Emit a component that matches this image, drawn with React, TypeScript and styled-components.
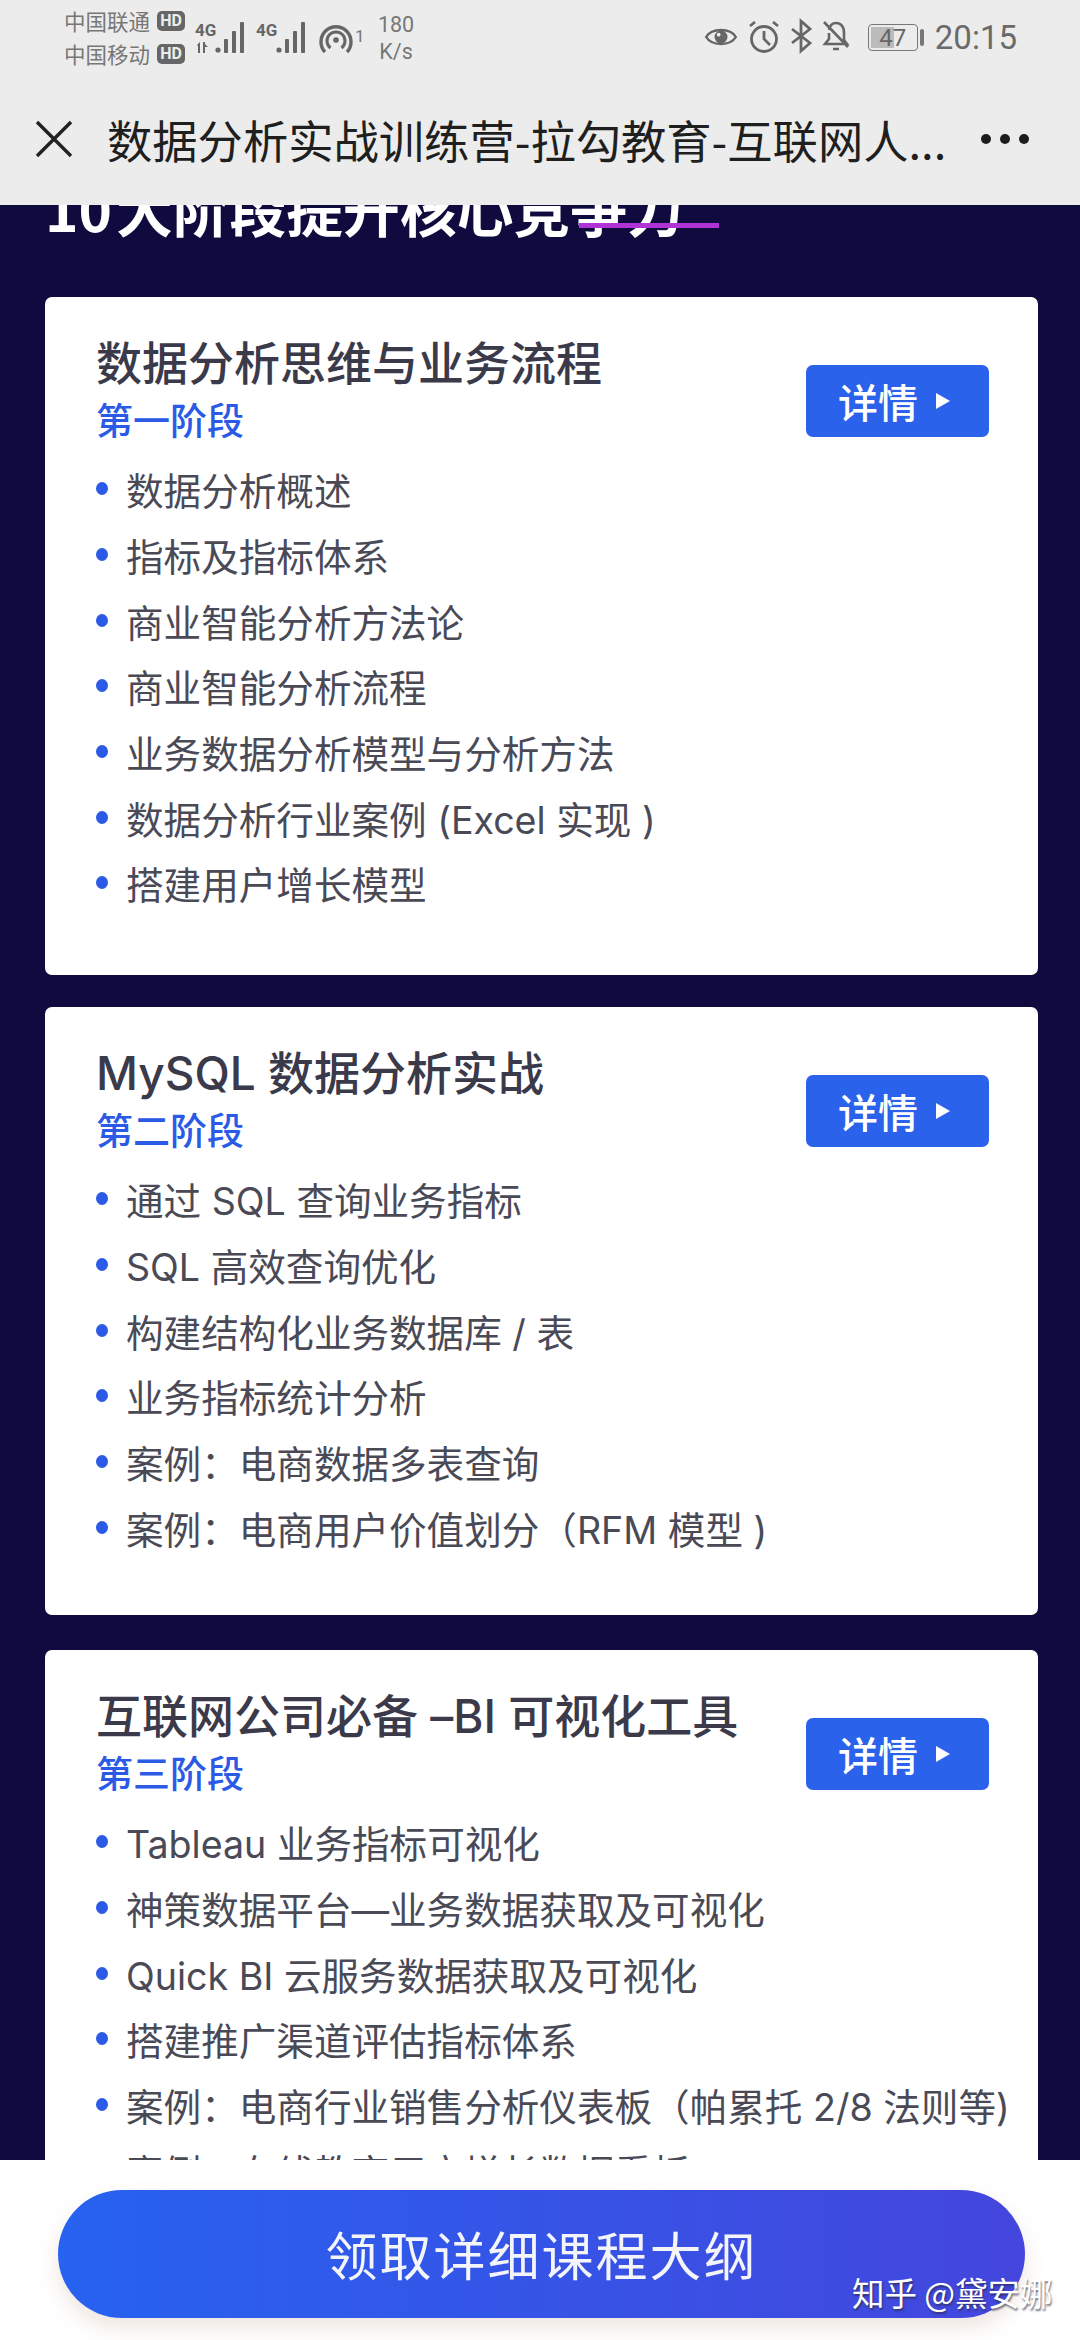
import React from "react";
import styled, { createGlobalStyle } from "styled-components";

const CJK = `"Inter", "Noto Sans CJK SC", "Noto Sans", sans-serif`;
const NOTO = `"Noto Sans CJK SC", "Noto Sans", sans-serif`;
const Global = createGlobalStyle`
  html, body { margin: 0; padding: 0; background: #0f0b3e; }
  * { box-sizing: border-box; }
`;
const Page = styled.div`
  position: relative; width: 1080px; height: 2340px; overflow: hidden;
  display: flex; flex-direction: column; font-family: ${CJK}; background: #0f0b3e;
`;
const Header = styled.header`
  height: 205px; flex: none; background: #ececec; position: relative; z-index: 2;
  display: flex; flex-direction: column;
`;
const StatusBar = styled.div`
  height: 74px; flex: none; padding: 7px 63px 0 64px; display: flex; align-items: flex-start; color: #666;
`;
const Carriers = styled.div`
  width: 131px; flex: none; display: flex; flex-direction: column; gap: 5px;
`;
const Carrier = styled.div`
  display: flex; align-items: center; gap: 7px; height: 28px; font-family: ${NOTO}; font-size: 21.5px; line-height: 28px; white-space: nowrap; color: #777;
`;
const HD = styled.span`
  font: 700 16px/20px "Roboto", sans-serif; background: #666; color: #ececec; border-radius: 5px; width: 28px; height: 20px;
  text-align: center; flex: none;
`;
const Speed = styled.div`
  width: 46px; margin-left: 7px; font: 400 21.5px/27px "Roboto", sans-serif; color: #777; text-align: center; padding-top: 4px;
`;
const Spacer = styled.div`flex: 1;`;
const Time = styled.div`
  font: 400 33px/38px "Roboto", sans-serif; color: #6a6a6a; margin-left: 11px; margin-top: 12px;
`;
const Svg = styled.svg`flex: none; display: block; overflow: visible;`;
const Nav = styled.div`
  flex: 1; display: flex; align-items: center; padding: 0 51px 0 35px; margin-top: -1px;
`;
const NavTitle = styled.div`
  margin-left: 34px; font-family: ${NOTO}; font-size: 45.3px; line-height: 60px; color: #1f1f1f; white-space: nowrap; flex: 1; font-weight: 400;
`;
const Dots = styled.div`display: flex; gap: 9px;`;
const Dot = styled.i`width: 10px; height: 10px; border-radius: 50%; background: #1c1c1c; display: block;`;
const Scroll = styled.main`
  flex: 1; min-height: 0; overflow: hidden; padding: 0 42px 0 45px;
`;
const Heading = styled.h1`
  position: relative; margin: -38px 0 0 0; height: 130px; font-family: ${NOTO}; font-size: 56.8px; line-height: 80px; word-spacing: -9px; font-weight: 700; color: #fff; white-space: nowrap; width: 100%;
`;
const Accent = styled.span`
  position: absolute; left: 534px; top: 56px; width: 140px; height: 5px; background: #b033d6;
`;
const Card = styled.section<{ $gap: number; $h?: number }>`
  background: #fff; border-radius: 7px; padding: 35px 49px 0 51px; margin-bottom: ${(p) => p.$gap}px; height: ${(p) => (p.$h ? p.$h + "px" : "auto")};
`;
const CardHead = styled.div`display: flex; justify-content: space-between; align-items: flex-start; height: 124px;`;
const CardTitle = styled.h2`
  margin: 0; font-size: 46px; line-height: 62px; font-weight: 500; color: #3b3a4a; white-space: nowrap;
`;
const Stage = styled.div`
  margin-top: 3px; font-size: 37px; line-height: 50px; font-weight: 500; color: #2b5be6;
`;
const Detail = styled.div`
  width: 183px; height: 72px; margin-top: 33px; padding-left: 32px; border-radius: 7px; background: #2a62ec; color: #fff; display: flex; align-items: center; gap: 18px; font-size: 40px; font-weight: 500;
`;
const Arrow = styled.i`
  width: 0; height: 0; border-left: 14px solid #fff; border-top: 8.5px solid transparent; border-bottom: 8.5px solid transparent; display: block;
`;
const List = styled.ul`margin: 0; padding: 0; list-style: none;`;
const Item = styled.li`
  height: 65.7px; display: flex; align-items: center; gap: 18px; font-size: 37.6px; color: #4a4a57; white-space: nowrap;
  &::before { content: ""; width: 12px; height: 13px; border-radius: 50%; background: #2b5be6; flex: none; }
`;
const Footer = styled.footer`
  height: 180px; flex: none; position: relative; z-index: 2; background: #fff; padding: 30px 55px 0 58px;
`;
const Cta = styled.div`
  height: 128px; border-radius: 64px; background: linear-gradient(90deg, #2762f0, #4446dd); color: #f4f4fb;
  box-shadow: 0 10px 20px rgba(190,150,130,.25); display: flex; align-items: center; justify-content: center; font-family: ${NOTO}; font-size: 52px; letter-spacing: 2px; padding-bottom: 2px;
`;
const Watermark = styled.div`
  position: absolute; z-index: 3; left: 852px; top: 2270px; font-family: ${NOTO}; font-size: 32.5px; line-height: 44px; color: #fff; white-space: nowrap; text-shadow: 1px 2px 2px rgba(40,40,60,.65);
`;
const BatteryWrap = styled.div`display: flex; align-items: center; gap: 2px; margin: 17px 0 0 18px;`;
const BatteryBox = styled.div`
  position: relative; width: 50px; height: 27px; border: 1.5px solid #777; border-radius: 4px; overflow: hidden;
  display: flex; align-items: center; justify-content: center;
`;
const BatteryFill = styled.div`position: absolute; left: 2px; top: 2px; bottom: 2px; width: 23px; background: #bbb;`;
const BatteryText = styled.span`position: relative; font: 400 24px/24px "Roboto", sans-serif; color: #666;`;
const BatteryCap = styled.div`width: 4px; height: 17px; background: #777; border-radius: 2px;`;
const Gap = styled.span<{ $w: number }>`width: ${(p) => p.$w}px; flex: none;`;
const IconTop = styled(Svg)<{ $t: number; $l: number }>`margin-top: ${(p) => p.$t}px; margin-left: ${(p) => p.$l}px;`;

const Bars = () => (
  <>
    <text x="0" y="14" fontFamily="Roboto, sans-serif" fontWeight="700" fontSize="17">4G</text>
    <circle cx="23" cy="28" r="2.6" />
    <rect x="29" y="17" width="4" height="14" rx="1" />
    <rect x="37" y="9" width="4" height="22" rx="1" />
    <rect x="45" y="0" width="4" height="31" rx="1" />
  </>
);

const cards = [
  { gap: 32, h: 678, title: "数据分析思维与业务流程", stage: "第一阶段", items: ["数据分析概述", "指标及指标体系", "商业智能分析方法论", "商业智能分析流程", "业务数据分析模型与分析方法", "数据分析行业案例 (Excel 实现 )", "搭建用户增长模型"] },
  { gap: 35, h: 608, title: "MySQL 数据分析实战", stage: "第二阶段", items: ["通过 SQL 查询业务指标", "SQL 高效查询优化", "构建结构化业务数据库 / 表", "业务指标统计分析", "案例：电商数据多表查询", "案例：电商用户价值划分（RFM 模型 )"] },
  { gap: 0, title: "互联网公司必备 –BI 可视化工具", stage: "第三阶段", items: ["Tableau 业务指标可视化", "神策数据平台—业务数据获取及可视化", "Quick BI 云服务数据获取及可视化", "搭建推广渠道评估指标体系", "案例：电商行业销售分析仪表板（帕累托 2/8 法则等)", "案例：在线教育用户增长数据看板"] },
];

export default function App() {
  return (
    <Page>
      <Global />
      <Header>
        <StatusBar>
          <Carriers>
            <Carrier>中国联通<HD>HD</HD></Carrier>
            <Carrier>中国移动<HD>HD</HD></Carrier>
          </Carriers>
          <IconTop width="50" height="34" viewBox="0 0 50 34" fill="#666" $t={15} $l={0}>
            <Bars />
            <path d="M2 23l3-3v11H3v-7zM8 20l5 5-5 0zM8 31V20h2v11z" />
          </IconTop>
          <Gap $w={11} />
          <IconTop width="50" height="34" viewBox="0 0 50 34" fill="#666" $t={15} $l={0}><Bars /></IconTop>
          <IconTop width="50" height="36" viewBox="0 0 50 36" fill="none" stroke="#666" strokeWidth="3.4" $t={16} $l={10}>
            <path d="M9 29A15 15 0 1 1 31 29" />
            <path d="M14.5 25A9 9 0 1 1 25.5 25" strokeWidth="3" />
            <circle cx="20" cy="17" r="2.8" fill="#666" stroke="none" />
            <text x="39" y="19" fill="#777" stroke="none" fontFamily="Roboto, sans-serif" fontSize="17">1</text>
          </IconTop>
          <Speed>180<br />K/s</Speed>
          <Spacer />
          <IconTop width="34" height="26" viewBox="0 0 36 28" fill="none" stroke="#666" strokeWidth="2.6" $t={17} $l={0}>
            <path d="M2 14C8 4 28 4 34 14C28 24 8 24 2 14Z" />
            <circle cx="18" cy="14" r="7" fill="#666" stroke="none" />
            <circle cx="15.5" cy="11.5" r="2" fill="#ececec" stroke="none" />
          </IconTop>
          <IconTop width="32" height="34" viewBox="0 0 32 34" fill="none" stroke="#666" strokeWidth="2.8" $t={13} $l={10}>
            <circle cx="16" cy="19" r="12.5" />
            <path d="M16 11v8l6 6M2 6l5-4M30 6l-5-4" />
          </IconTop>
          <IconTop width="22" height="34" viewBox="0 0 22 34" fill="none" stroke="#666" strokeWidth="2.8" $t={12} $l={10}>
            <path d="M2 10l18 14-9 8V2l9 8L2 24" />
          </IconTop>
          <IconTop width="28" height="34" viewBox="0 0 28 34" fill="none" stroke="#666" strokeWidth="2.6" $t={12} $l={10}>
            <path d="M7 11C8 6 11 4 14 4c5 0 8 4 8 9v8l3 4H3l4-5v-6M11 30h6M2 3l24 25" />
          </IconTop>
          <BatteryWrap>
            <BatteryBox><BatteryFill /><BatteryText>47</BatteryText></BatteryBox>
            <BatteryCap />
          </BatteryWrap>
          <Time>20:15</Time>
        </StatusBar>
        <Nav>
          <Svg width="38" height="38" viewBox="0 0 38 38" stroke="#222" strokeWidth="3.4" fill="none">
            <path d="M2 2l34 34M36 2L2 36" />
          </Svg>
          <NavTitle>数据分析实战训练营-拉勾教育-互联网人...</NavTitle>
          <Dots><Dot /><Dot /><Dot /></Dots>
        </Nav>
      </Header>
      <Scroll>
        <Heading>10 大阶段提升核心竞争力<Accent /></Heading>
        {cards.map((c) => (
          <Card key={c.stage} $gap={c.gap} $h={c.h}>
            <CardHead>
              <div>
                <CardTitle>{c.title}</CardTitle>
                <Stage>{c.stage}</Stage>
              </div>
              <Detail>详情<Arrow /></Detail>
            </CardHead>
            <List>{c.items.map((t) => <Item key={t}>{t}</Item>)}</List>
          </Card>
        ))}
      </Scroll>
      <Footer><Cta>领取详细课程大纲</Cta></Footer>
      <Watermark>知乎 @黛安娜</Watermark>
    </Page>
  );
}
